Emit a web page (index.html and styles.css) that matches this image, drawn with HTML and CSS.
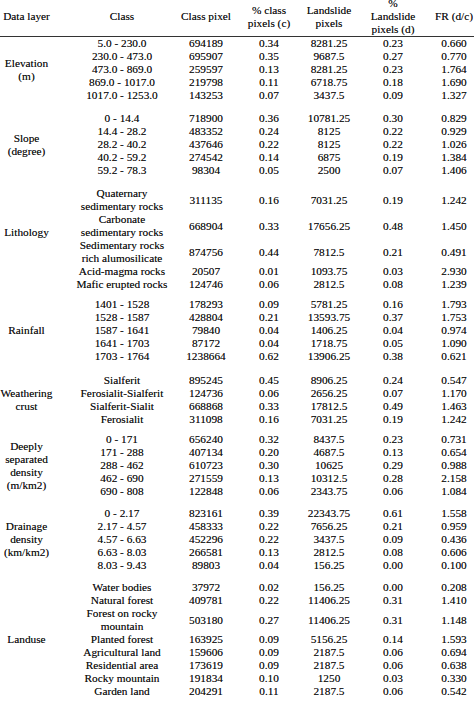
FILE: index.html
```html
<!DOCTYPE html>
<html lang="en">
<head>
<meta charset="utf-8">
<title>Frequency ratio table</title>
<link rel="stylesheet" href="styles.css">
</head>
<body>
<table class="fr-table">
  <colgroup>
    <col class="c-layer">
    <col class="c-class">
    <col class="c-pix">
    <col class="c-pct">
    <col class="c-ls">
    <col class="c-lpct">
    <col class="c-fr">
  </colgroup>
  <thead>
    <tr>
      <th>Data layer</th>
      <th class="cls">Class</th>
      <th>Class pixel</th>
      <th>% class<br>pixels (c)</th>
      <th>Landslide<br>pixels</th>
      <th>%<br>Landslide<br>pixels (d)</th>
      <th>FR (d/c)</th>
    </tr>
  </thead>
  <tbody class="grp first">
    <tr><td rowspan="5" class="layer">Elevation<br>(m)</td><td class="cls">5.0 - 230.0</td><td>694189</td><td>0.34</td><td>8281.25</td><td>0.23</td><td>0.660</td></tr>
    <tr><td class="cls">230.0 - 473.0</td><td>695907</td><td>0.35</td><td>9687.5</td><td>0.27</td><td>0.770</td></tr>
    <tr><td class="cls">473.0 - 869.0</td><td>259597</td><td>0.13</td><td>8281.25</td><td>0.23</td><td>1.764</td></tr>
    <tr><td class="cls">869.0 - 1017.0</td><td>219798</td><td>0.11</td><td>6718.75</td><td>0.18</td><td>1.690</td></tr>
    <tr><td class="cls">1017.0 - 1253.0</td><td>143253</td><td>0.07</td><td>3437.5</td><td>0.09</td><td>1.327</td></tr>
  </tbody>
  <tbody class="grp gap-lg">
    <tr><td rowspan="5" class="layer">Slope<br>(degree)</td><td class="cls">0 - 14.4</td><td>718900</td><td>0.36</td><td>10781.25</td><td>0.30</td><td>0.829</td></tr>
    <tr><td class="cls">14.4 - 28.2</td><td>483352</td><td>0.24</td><td>8125</td><td>0.22</td><td>0.929</td></tr>
    <tr><td class="cls">28.2 - 40.2</td><td>437646</td><td>0.22</td><td>8125</td><td>0.22</td><td>1.026</td></tr>
    <tr><td class="cls">40.2 - 59.2</td><td>274542</td><td>0.14</td><td>6875</td><td>0.19</td><td>1.384</td></tr>
    <tr><td class="cls">59.2 - 78.3</td><td>98304</td><td>0.05</td><td>2500</td><td>0.07</td><td>1.406</td></tr>
  </tbody>
  <tbody class="grp gap-lg">
    <tr><td rowspan="5" class="layer layer-up">Lithology</td><td class="cls">Quaternary<br>sedimentary rocks</td><td>311135</td><td>0.16</td><td>7031.25</td><td>0.19</td><td>1.242</td></tr>
    <tr><td class="cls">Carbonate<br>sedimentary rocks</td><td>668904</td><td>0.33</td><td>17656.25</td><td>0.48</td><td>1.450</td></tr>
    <tr><td class="cls">Sedimentary rocks<br>rich alumosilicate</td><td>874756</td><td>0.44</td><td>7812.5</td><td>0.21</td><td>0.491</td></tr>
    <tr><td class="cls">Acid-magma rocks</td><td>20507</td><td>0.01</td><td>1093.75</td><td>0.03</td><td>2.930</td></tr>
    <tr><td class="cls">Mafic erupted rocks</td><td>124746</td><td>0.06</td><td>2812.5</td><td>0.08</td><td>1.239</td></tr>
  </tbody>
  <tbody class="grp gap-sm">
    <tr><td rowspan="5" class="layer">Rainfall</td><td class="cls">1401 - 1528</td><td>178293</td><td>0.09</td><td>5781.25</td><td>0.16</td><td>1.793</td></tr>
    <tr><td class="cls">1528 - 1587</td><td>428804</td><td>0.21</td><td>13593.75</td><td>0.37</td><td>1.753</td></tr>
    <tr><td class="cls">1587 - 1641</td><td>79840</td><td>0.04</td><td>1406.25</td><td>0.04</td><td>0.974</td></tr>
    <tr><td class="cls">1641 - 1703</td><td>87172</td><td>0.04</td><td>1718.75</td><td>0.05</td><td>1.090</td></tr>
    <tr><td class="cls">1703 - 1764</td><td>1238664</td><td>0.62</td><td>13906.25</td><td>0.38</td><td>0.621</td></tr>
  </tbody>
  <tbody class="grp gap-xl">
    <tr><td rowspan="4" class="layer">Weathering<br>crust</td><td class="cls">Sialferit</td><td>895245</td><td>0.45</td><td>8906.25</td><td>0.24</td><td>0.547</td></tr>
    <tr><td class="cls">Ferosialit-Sialferit</td><td>124736</td><td>0.06</td><td>2656.25</td><td>0.07</td><td>1.170</td></tr>
    <tr><td class="cls">Sialferit-Sialit</td><td>668868</td><td>0.33</td><td>17812.5</td><td>0.49</td><td>1.463</td></tr>
    <tr><td class="cls">Ferosialit</td><td>311098</td><td>0.16</td><td>7031.25</td><td>0.19</td><td>1.242</td></tr>
  </tbody>
  <tbody class="grp gap-sm">
    <tr><td rowspan="5" class="layer">Deeply<br>separated<br>density<br>(m/km2)</td><td class="cls">0 - 171</td><td>656240</td><td>0.32</td><td>8437.5</td><td>0.23</td><td>0.731</td></tr>
    <tr><td class="cls">171 - 288</td><td>407134</td><td>0.20</td><td>4687.5</td><td>0.13</td><td>0.654</td></tr>
    <tr><td class="cls">288 - 462</td><td>610723</td><td>0.30</td><td>10625</td><td>0.29</td><td>0.988</td></tr>
    <tr><td class="cls">462 - 690</td><td>271559</td><td>0.13</td><td>10312.5</td><td>0.28</td><td>2.158</td></tr>
    <tr><td class="cls">690 - 808</td><td>122848</td><td>0.06</td><td>2343.75</td><td>0.06</td><td>1.084</td></tr>
  </tbody>
  <tbody class="grp">
    <tr><td rowspan="5" class="layer">Drainage<br>density<br>(km/km2)</td><td class="cls">0 - 2.17</td><td>823161</td><td>0.39</td><td>22343.75</td><td>0.61</td><td>1.558</td></tr>
    <tr><td class="cls">2.17 - 4.57</td><td>458333</td><td>0.22</td><td>7656.25</td><td>0.21</td><td>0.959</td></tr>
    <tr><td class="cls">4.57 - 6.63</td><td>452296</td><td>0.22</td><td>3437.5</td><td>0.09</td><td>0.436</td></tr>
    <tr><td class="cls">6.63 - 8.03</td><td>266581</td><td>0.13</td><td>2812.5</td><td>0.08</td><td>0.606</td></tr>
    <tr><td class="cls">8.03 - 9.43</td><td>89803</td><td>0.04</td><td>156.25</td><td>0.00</td><td>0.100</td></tr>
  </tbody>
  <tbody class="grp">
    <tr><td rowspan="8" class="layer">Landuse</td><td class="cls">Water bodies</td><td>37972</td><td>0.02</td><td>156.25</td><td>0.00</td><td>0.208</td></tr>
    <tr><td class="cls">Natural forest</td><td>409781</td><td>0.22</td><td>11406.25</td><td>0.31</td><td>1.410</td></tr>
    <tr><td class="cls">Forest on rocky<br>mountain</td><td>503180</td><td>0.27</td><td>11406.25</td><td>0.31</td><td>1.148</td></tr>
    <tr><td class="cls">Planted forest</td><td>163925</td><td>0.09</td><td>5156.25</td><td>0.14</td><td>1.593</td></tr>
    <tr><td class="cls">Agricultural land</td><td>159606</td><td>0.09</td><td>2187.5</td><td>0.06</td><td>0.694</td></tr>
    <tr><td class="cls">Residential area</td><td>173619</td><td>0.09</td><td>2187.5</td><td>0.06</td><td>0.638</td></tr>
    <tr><td class="cls">Rocky mountain</td><td>191834</td><td>0.10</td><td>1250</td><td>0.03</td><td>0.330</td></tr>
    <tr><td class="cls">Garden land</td><td>204291</td><td>0.11</td><td>2187.5</td><td>0.06</td><td>0.542</td></tr>
  </tbody>
</table>
</body>
</html>
```
FILE: styles.css
```css
html, body {
  margin: 0;
  padding: 0;
  background: #ffffff;
}

.fr-table {
  font-family: "Liberation Serif", "Times New Roman", serif;
  font-size: 11.3px;
  line-height: 13px;
  color: #111111;
  text-shadow: 0 0 0.6px rgba(0, 0, 0, 0.55);
  border-collapse: collapse;
  border-spacing: 0;
  table-layout: fixed;
  width: 474px;
  margin-top: -3px;
}

.c-layer { width: 53px; }
.c-class { width: 127px; }
.c-pix   { width: 52px; }
.c-pct   { width: 74px; }
.c-ls    { width: 46px; }
.c-lpct  { width: 82px; }
.c-fr    { width: 40px; }

.fr-table th,
.fr-table td {
  padding: 0;
  text-align: center;
  vertical-align: middle;
  white-space: nowrap;
  font-weight: normal;
}

.fr-table thead th {
  border-bottom: 1px solid #333333;
}

.fr-table .cls {
  padding-left: 11px;
}

.grp > tr:first-child > td {
  padding-top: 9px;
}

.grp.first > tr:first-child > td {
  padding-top: 0;
}

.grp.gap-sm > tr:first-child > td {
  padding-top: 7px;
}

.grp.gap-lg > tr:first-child > td {
  padding-top: 10px;
}

.grp.gap-xl > tr:first-child > td {
  padding-top: 11px;
}

.fr-table .layer-up {
  padding-bottom: 13px;
}
```
